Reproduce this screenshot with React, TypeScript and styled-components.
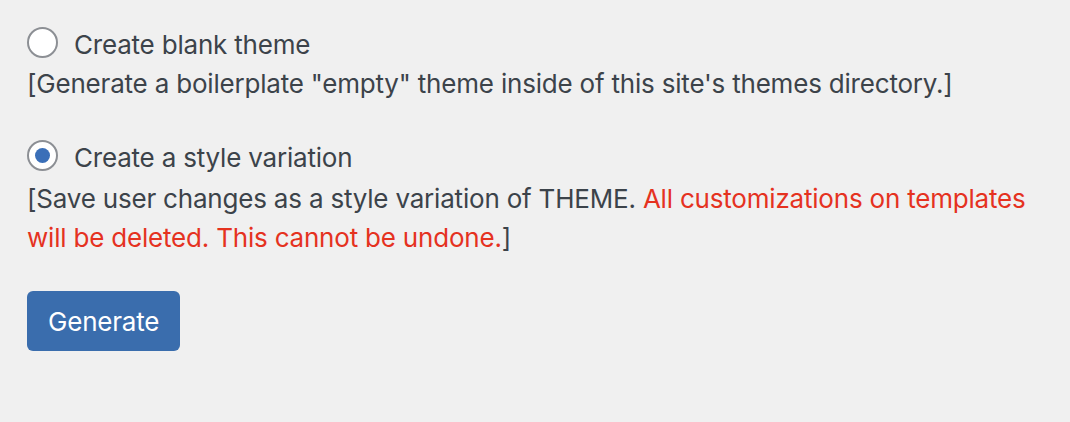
import React from "react";
import styled, { createGlobalStyle } from "styled-components";

const Global = createGlobalStyle`
  html, body { margin: 0; padding: 0; background: #f0f0f0; }
  body { font-family: Inter, "Liberation Sans", Arial, sans-serif; }
`;

const Page = styled.form`
  padding: 25px 27px 0;
  font-size: 26px;
  line-height: 39px;
  letter-spacing: -0.2px;
  color: #3c434a;
`;

const Option = styled.div<{ $gap: number }>`
  display: flex;
  flex-direction: column;
  margin-bottom: ${(p) => p.$gap}px;
`;

const Label = styled.label`
  display: flex;
  align-items: center;
  height: 39px;
`;

const Radio = styled.span<{ $checked?: boolean }>`
  box-sizing: border-box;
  width: 31px;
  height: 31px;
  border-radius: 50%;
  border: 2px solid #8c8f94;
  background: #fff;
  margin: -5px 16px 0 0;
  display: flex;
  align-items: center;
  justify-content: center;
  &::after {
    content: "";
    display: ${(p) => (p.$checked ? "block" : "none")};
    width: 15px;
    height: 15px;
    border-radius: 50%;
    background: #3a6fb8;
  }
`;

const Desc = styled.p<{ $top?: number }>`
  margin: ${(p) => p.$top ?? 0}px 0 0;
`;

const Warn = styled.span`
  color: #e5321f;
`;

const Button = styled.button`
  font-family: inherit;
  font-size: 26px;
  letter-spacing: -0.2px;
  color: #fff;
  background: #3a6dad;
  border: none;
  border-radius: 6px;
  height: 60px;
  padding: 0 21px;
  cursor: pointer;
`;

export default function App() {
  return (
    <>
      <Global />
      <Page>
        <Option $gap={35}>
          <Label>
            <Radio />
            Create blank theme
          </Label>
          <Desc>[Generate a boilerplate "empty" theme inside of this site's themes directory.]</Desc>
        </Option>
        <Option $gap={34}>
          <Label>
            <Radio $checked />
            Create a style variation
          </Label>
          <Desc $top={2}>
            [Save user changes as a style variation of THEME.{" "}
            <Warn>All customizations on templates will be deleted. This cannot be undone.</Warn>]
          </Desc>
        </Option>
        <Button type="button">Generate</Button>
      </Page>
    </>
  );
}
